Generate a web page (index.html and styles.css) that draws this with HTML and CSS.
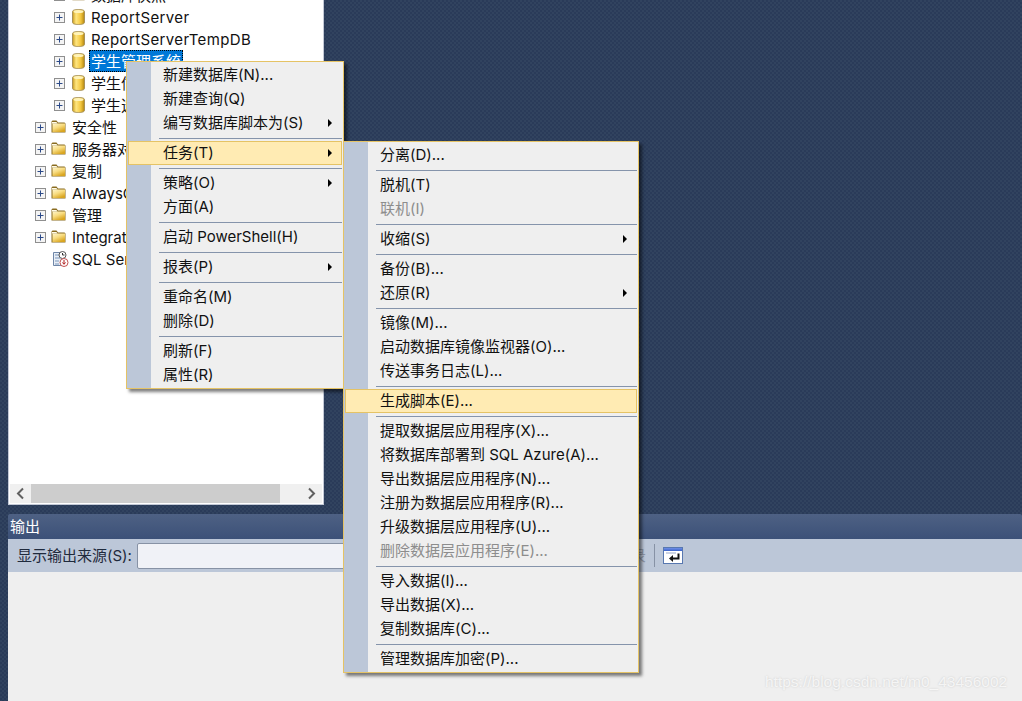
FILE: index.html
```html
<!DOCTYPE html>
<html lang="zh-CN">
<head>
<meta charset="utf-8">
<title>SQL Server Management Studio</title>
<link rel="stylesheet" href="styles.css">
</head>
<body>
<svg class="defs" width="0" height="0" aria-hidden="true">
  <defs>
    <linearGradient id="gold" x1="0" x2="1" y1="0" y2="0">
      <stop offset="0" stop-color="#c99a1c"/><stop offset=".3" stop-color="#ffe680"/><stop offset=".7" stop-color="#f2c53d"/><stop offset="1" stop-color="#b08410"/>
    </linearGradient>
    <linearGradient id="fold" x1="0" x2="0.6" y1="0" y2="1">
      <stop offset="0" stop-color="#fff6cc"/><stop offset=".5" stop-color="#f8dc80"/><stop offset="1" stop-color="#d9a520"/>
    </linearGradient>
    <linearGradient id="tick" x1="0" x2="0" y1="0" y2="1">
      <stop offset="0" stop-color="#6f8fe8"/><stop offset="1" stop-color="#3a62c8"/>
    </linearGradient>
    <symbol id="plus" viewBox="0 0 11 11">
      <rect x=".5" y=".5" width="10" height="10" fill="#f4f4f4" stroke="#8f8f8f"/>
      <path d="M2.5 5.5h6M5.5 2.5v6" stroke="#2c4a88" fill="none"/>
    </symbol>
    <symbol id="db" viewBox="0 0 13 16">
      <path d="M.5 2.5C.5 1.2 3.2.5 6.5.5s6 .7 6 2v11c0 1.3-2.700 2-6 2s-6-.7-6-2z" fill="url(#gold)" stroke="#a8925a"/>
      <ellipse cx="6.500" cy="2.500" rx="5" ry="1.500" fill="#fff3b8"/>
    </symbol>
    <symbol id="folder" viewBox="0 0 15 13">
      <path d="M.5 12.500V1.500l1-1h4l1.500 2h6.500l1 1v9z" fill="#8a6c20"/>
      <path d="M1.500 12V3.500h12.500V12z" fill="url(#fold)"/>
      <path d="M1 2h4.500l1 1.500H1z" fill="#fffbe8"/>
    </symbol>
    <symbol id="agent" viewBox="0 0 16 16">
      <path d="M.5 1.500h9v13h-9z" fill="#e8eef6" stroke="#6f86a8"/>
      <path d="M2 4h6M2 7h5M2 10h4M2 13h4" stroke="#7d97bb"/>
      <circle cx="9.500" cy="4" r="3.500" fill="#fff" stroke="#555"/>
      <path d="M9.500 2v2h2" stroke="#333" fill="none"/>
      <circle cx="11" cy="11.500" r="4" fill="#fff" stroke="#c25050"/>
      <path d="M11 9v3.500M9.500 11.500l1.500 1.800 1.500-1.800" stroke="#b01818" fill="none"/>
    </symbol>
  </defs>
</svg>

<main class="page">
  <section class="tree-panel">
    <div class="tree-view">
      <ul class="tree">
        <li class="row row-db"><svg class="exp"><use href="#plus"/></svg><svg class="ico-db"><use href="#folder"/></svg><span class="label">数据库快照</span></li>
        <li class="row row-db"><svg class="exp"><use href="#plus"/></svg><svg class="ico-db"><use href="#db"/></svg><span class="label latin">ReportServer</span></li>
        <li class="row row-db"><svg class="exp"><use href="#plus"/></svg><svg class="ico-db"><use href="#db"/></svg><span class="label latin">ReportServerTempDB</span></li>
        <li class="row row-db"><svg class="exp"><use href="#plus"/></svg><svg class="ico-db"><use href="#db"/></svg><span class="label selected">学生管理系统</span></li>
        <li class="row row-db"><svg class="exp"><use href="#plus"/></svg><svg class="ico-db"><use href="#db"/></svg><span class="label">学生信息管理</span></li>
        <li class="row row-db"><svg class="exp"><use href="#plus"/></svg><svg class="ico-db"><use href="#db"/></svg><span class="label">学生选课系统</span></li>
        <li class="row row-top"><svg class="exp"><use href="#plus"/></svg><svg class="ico-folder"><use href="#folder"/></svg><span class="label">安全性</span></li>
        <li class="row row-top"><svg class="exp"><use href="#plus"/></svg><svg class="ico-folder"><use href="#folder"/></svg><span class="label">服务器对象</span></li>
        <li class="row row-top"><svg class="exp"><use href="#plus"/></svg><svg class="ico-folder"><use href="#folder"/></svg><span class="label">复制</span></li>
        <li class="row row-top"><svg class="exp"><use href="#plus"/></svg><svg class="ico-folder"><use href="#folder"/></svg><span class="label">AlwaysOn 高可用性</span></li>
        <li class="row row-top"><svg class="exp"><use href="#plus"/></svg><svg class="ico-folder"><use href="#folder"/></svg><span class="label">管理</span></li>
        <li class="row row-top"><svg class="exp"><use href="#plus"/></svg><svg class="ico-folder"><use href="#folder"/></svg><span class="label">Integration Services 目录</span></li>
        <li class="row row-leaf"><svg class="ico-agent"><use href="#agent"/></svg><span class="label">SQL Server 代理</span></li>
      </ul>
    </div>
    <div class="hscroll">
      <svg class="sb-arrow" viewBox="0 0 21 19"><path d="M13 4.500 8 9.500l5 5" fill="none" stroke="#606060" stroke-width="2"/></svg>
      <div class="sb-track"><div class="sb-thumb"></div></div>
      <svg class="sb-arrow" viewBox="0 0 21 19"><path d="M8 4.500l5 5-5 5" fill="none" stroke="#606060" stroke-width="2"/></svg>
    </div>
  </section>

  <section class="output">
    <header class="output-title">输出</header>
    <div class="output-bar">
      <span class="source-label">显示输出来源(S):</span>
      <div class="combo"></div>
      <span class="bar-dim">录</span>
      <span class="bar-sep"></span>
      <svg class="wrap-ico" viewBox="0 0 20 17">
        <rect x=".5" y=".5" width="19" height="16" fill="#fff" stroke="#5878b0"/>
        <rect x="1" y="1" width="18" height="3" fill="url(#tick)"/>
        <path d="M3 6h10" stroke="#9aa8c8"/>
        <path d="M15.500 6.500v5H9" fill="none" stroke="#111" stroke-width="2"/>
        <path d="M10 8v7L6 11.500z" fill="#111"/>
      </svg>
    </div>
    <div class="output-body"></div>
  </section>
</main>

<nav class="menu menu-main">
  <div class="item">新建数据库(N)...</div>
  <div class="item">新建查询(Q)</div>
  <div class="item sub">编写数据库脚本为(S)</div>
  <div class="sep"></div>
  <div class="item sub hot">任务(T)</div>
  <div class="sep"></div>
  <div class="item sub">策略(O)</div>
  <div class="item">方面(A)</div>
  <div class="sep"></div>
  <div class="item">启动 PowerShell(H)</div>
  <div class="sep"></div>
  <div class="item sub">报表(P)</div>
  <div class="sep"></div>
  <div class="item">重命名(M)</div>
  <div class="item">删除(D)</div>
  <div class="sep"></div>
  <div class="item">刷新(F)</div>
  <div class="item">属性(R)</div>
</nav>

<nav class="menu menu-tasks">
  <div class="item">分离(D)...</div>
  <div class="sep"></div>
  <div class="item">脱机(T)</div>
  <div class="item off">联机(I)</div>
  <div class="sep"></div>
  <div class="item sub">收缩(S)</div>
  <div class="sep"></div>
  <div class="item">备份(B)...</div>
  <div class="item sub">还原(R)</div>
  <div class="sep"></div>
  <div class="item">镜像(M)...</div>
  <div class="item">启动数据库镜像监视器(O)...</div>
  <div class="item">传送事务日志(L)...</div>
  <div class="sep"></div>
  <div class="item hot">生成脚本(E)...</div>
  <div class="sep"></div>
  <div class="item">提取数据层应用程序(X)...</div>
  <div class="item">将数据库部署到 SQL Azure(A)...</div>
  <div class="item">导出数据层应用程序(N)...</div>
  <div class="item">注册为数据层应用程序(R)...</div>
  <div class="item">升级数据层应用程序(U)...</div>
  <div class="item off">删除数据层应用程序(E)...</div>
  <div class="sep"></div>
  <div class="item">导入数据(I)...</div>
  <div class="item">导出数据(X)...</div>
  <div class="item">复制数据库(C)...</div>
  <div class="sep"></div>
  <div class="item">管理数据库加密(P)...</div>
</nav>

<div class="watermark">https://blog.csdn.net/m0_43456002</div>
</body>
</html>
```

FILE: styles.css
```css
* { box-sizing: border-box; }

html, body {
  margin: 0;
  height: 701px;
  overflow: hidden;
}

body {
  position: relative;
  font: 15px/22px Inter, "Noto Sans CJK SC", sans-serif;
  color: #111;
  background-color: #2d3f60;
  background-image: conic-gradient(#2a3b59 25%, #31435f 0 50%, #2a3b59 0 75%, #31435f 0);
  background-size: 4px 4px;
}

.defs { position: absolute; }

.page {
  display: flex;
  flex-direction: column;
  gap: 9px;
  height: 701px;
  padding-left: 8px;
}

/* object explorer */
.tree-panel {
  width: 316px;
  height: 505px;
  display: flex;
  flex-direction: column;
  background: #fff;
  border: 1px solid #c3c9d6;
  border-top: 0;
}

.tree-view {
  flex: 1;
  overflow: hidden;
}

.tree {
  list-style: none;
  margin: -16px 0 0;
  padding: 0;
}

.row {
  height: 22px;
  display: flex;
  align-items: center;
  white-space: nowrap;
}

.row-db { padding-left: 45px; }
.row-top { padding-left: 26px; }
.row-leaf { padding-left: 44px; }

.exp { width: 11px; height: 11px; flex: none; }
.ico-db { width: 13px; height: 16px; margin-left: 7px; flex: none; }
.ico-folder { width: 15px; height: 13px; margin: 0 0 2px 5px; flex: none; }
.ico-agent { width: 16px; height: 16px; flex: none; }

.row-db .label { margin-left: 6px; }
.row-top .label { margin-left: 6px; }
.row-leaf .label { margin-left: 3px; }

.label {
  height: 22px;
  padding: 1px 2px 0;
  margin-right: -2px;
  position: relative;
  left: -2px;
}

.latin { letter-spacing: .38px; }

.selected {
  background: #0078d7;
  color: #fff;
  outline: 1px dotted #000;
  outline-offset: -1px;
}

.hscroll {
  height: 19px;
  margin: 0 1px 1px;
  flex: none;
  display: flex;
  background: #f0f0f0;
}

.sb-arrow { width: 21px; height: 19px; flex: none; }
.sb-track { flex: 1; }
.sb-thumb { width: 249px; height: 19px; background: #cdcdcd; }

/* output */
.output {
  flex: 1;
  display: flex;
  flex-direction: column;
  min-height: 0;
}

.output-title {
  height: 25px;
  padding-left: 2px;
  color: #fff;
  line-height: 25px;
  background: linear-gradient(#4e6184, #3c5178);
  border-radius: 2px 2px 0 0;
}

.output-bar {
  height: 33px;
  display: flex;
  align-items: center;
  padding-left: 9px;
  background: #bcc7d8;
  color: #1f2a3c;
}

.source-label { width: 120px; }

.combo {
  width: 487px;
  height: 26px;
  background: #f0f2f7;
  border: 1px solid #8792a5;
  border-radius: 2px;
}

.bar-dim { margin-left: 7px; width: 15px; color: #8f98a8; }
.bar-sep { width: 1px; height: 23px; margin: 0 7px 0 8px; background: #8792a5; }
.wrap-ico { width: 20px; height: 17px; margin-left: 1px; }

.output-body {
  flex: 1;
  background: #efefef;
}

/* context menus */
.menu {
  position: absolute;
  padding: 1px;
  border: 1px solid #e5c365;
  box-shadow: 3px 3px 3px rgba(0, 0, 0, .5);
  background: linear-gradient(90deg, #bcc7d8 24px, #efefef 24px);
}

.menu-main { left: 126px; top: 61px; width: 218px; }
.menu-tasks { left: 343px; top: 141px; width: 296px; }

.item {
  position: relative;
  height: 24px;
  line-height: 24px;
  padding-left: 35px;
  white-space: nowrap;
}

.sub::after {
  content: "";
  position: absolute;
  right: 10px;
  top: 8px;
  border: 4px solid transparent;
  border-left-color: #000;
  border-right-width: 0;
}

.hot {
  background: #ffebb3;
  outline: 1px solid #e5c365;
  outline-offset: -1px;
}

.off { color: #8d8d8d; }

.sep {
  height: 6px;
  margin-left: 31px;
  background: linear-gradient(transparent 3px, #8594ab 3px, #8594ab 4px, transparent 4px);
}

.watermark {
  position: absolute;
  left: 765px;
  top: 671px;
  color: rgba(255, 255, 255, .75);
  font-family: "Liberation Sans", sans-serif;
  font-size: 15.500px;
  text-shadow: 0 0 2px #c8c8c8;
}
```
